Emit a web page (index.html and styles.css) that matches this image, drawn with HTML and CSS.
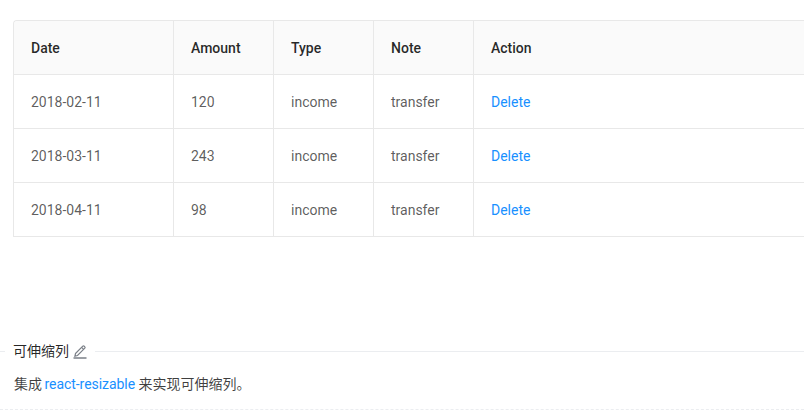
FILE: index.html
```html
<!DOCTYPE html>
<html lang="zh-CN">
<head>
<meta charset="utf-8">
<title>可伸缩列</title>
<link rel="stylesheet" href="styles.css">
</head>
<body>
<main class="page">
  <div class="table-wrap">
    <table class="table">
      <colgroup>
        <col class="col-date"><col class="col-mid"><col class="col-mid"><col class="col-mid"><col>
      </colgroup>
      <thead>
        <tr><th>Date</th><th>Amount</th><th>Type</th><th>Note</th><th>Action</th></tr>
      </thead>
      <tbody>
        <tr><td>2018-02-11</td><td>120</td><td>income</td><td>transfer</td><td><a href="#">Delete</a></td></tr>
        <tr><td>2018-03-11</td><td>243</td><td>income</td><td>transfer</td><td><a href="#">Delete</a></td></tr>
        <tr><td>2018-04-11</td><td>98</td><td>income</td><td>transfer</td><td><a href="#">Delete</a></td></tr>
      </tbody>
    </table>
  </div>
  <section class="meta">
    <div class="divider">
      <span class="divider-text">可伸缩列
        <a class="edit" href="#" aria-label="edit">
          <svg viewBox="0 0 14 16" width="14" height="16" fill="none" stroke="currentColor" stroke-width="1.2">
            <path d="M2.5 10.5 9.8 3.2a1 1 0 0 1 1.4 0l.6.6a1 1 0 0 1 0 1.4L4.5 12.5l-2.6.6z"/>
            <path d="M8.6 4.4l2 2"/>
            <path d="M0.5 15h13" stroke-width="1.5"/>
          </svg>
        </a>
      </span>
    </div>
    <p class="desc">集成 <a class="desc-link" href="#">react-resizable</a> 来实现可伸缩列。</p>
  </section>
</main>
</body>
</html>
```
FILE: styles.css
```css
html, body {
  margin: 0;
  height: 411px;
  overflow: hidden;
  background: #fff;
}
body {
  font-family: Roboto, "Noto Sans CJK SC", sans-serif;
  font-size: 14px;
  color: rgba(0, 0, 0, 0.65);
}
.page {
  width: 804px;
  overflow: hidden;
}
.table-wrap {
  padding: 20px 0 0 13px;
}
.table {
  width: 820px;
  table-layout: fixed;
  border-collapse: separate;
  border-spacing: 0;
  border-top: 1px solid #e8e8e8;
  border-left: 1px solid #e8e8e8;
  border-top-left-radius: 4px;
}
.col-date { width: 160px; }
.col-mid { width: 100px; }
th, td {
  height: 53px;
  padding: 0 15px 0 17px;
  text-align: left;
  border-right: 1px solid #e8e8e8;
  border-bottom: 1px solid #e8e8e8;
  line-height: 22px;
}
th {
  background: #fafafa;
  font-weight: 500;
  color: rgba(0, 0, 0, 0.85);
}
th:first-child { border-top-left-radius: 4px; }
a {
  color: #1890ff;
  text-decoration: none;
}
.meta {
  margin-top: 103px;
}
.divider {
  display: flex;
  align-items: center;
  color: rgba(0, 0, 0, 0.85);
}
.divider::before, .divider::after {
  content: "";
  border-top: 1px solid #ebedf0;
}
.divider::before { width: 5px; }
.divider::after { flex: 1; }
.divider-text {
  display: flex;
  align-items: center;
  gap: 4px;
  padding: 0 8px;
  line-height: 22px;
}
.edit {
  color: #7a7f87;
  display: flex;
}
.desc {
  margin: 11px 0 0;
  padding-left: 14px;
  line-height: 22px;
  padding-bottom: 14px;
  border-bottom: 1px dashed #ebedf0;
  color: rgba(0, 0, 0, 0.75);
}
.desc-link {
  letter-spacing: -0.05px;
  margin-left: -1px;
}
```
